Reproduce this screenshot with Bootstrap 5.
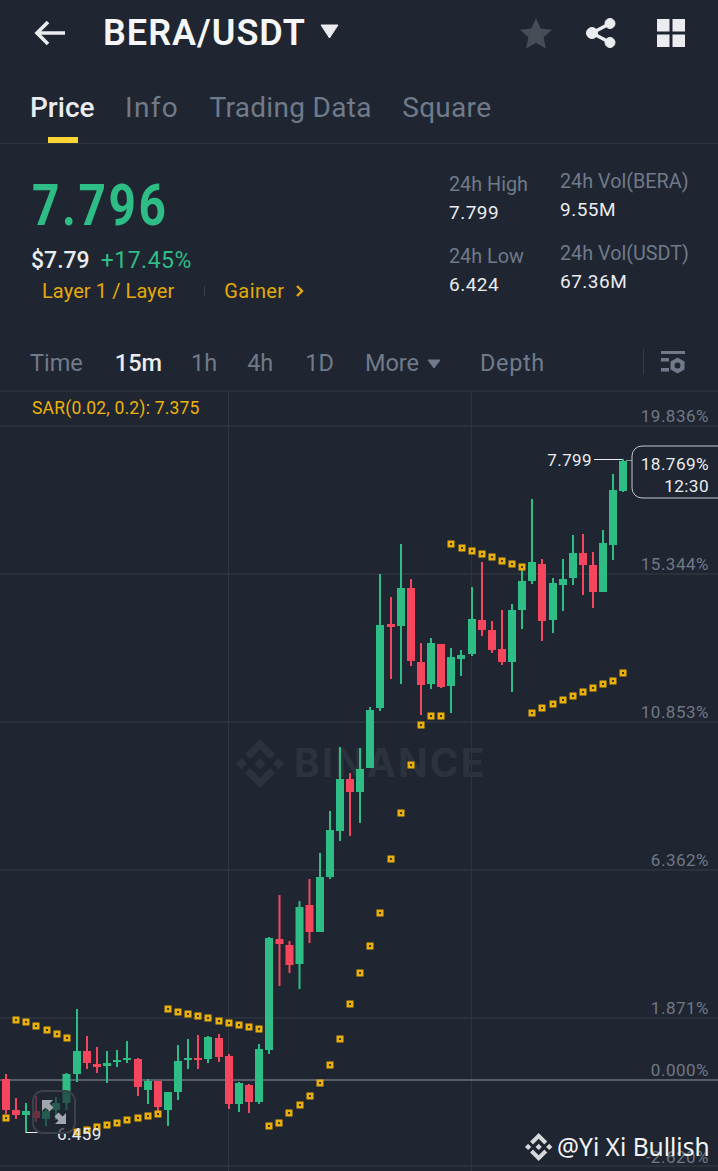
<!DOCTYPE html>
<html>
  <head>
    <title>BERA/USDT</title>
    <link href="https://cdn.jsdelivr.net/npm/bootstrap@5.3.3/dist/css/bootstrap.min.css" rel="stylesheet">
    <script src="https://cdn.jsdelivr.net/npm/bootstrap@5.3.3/dist/js/bootstrap.bundle.min.js"></script>
    <style>
      html, body { margin: 0; background: #1f2631; }
      body { width: 718px; height: 1171px; overflow: hidden; font-family: Roboto, "Liberation Sans", sans-serif; color: #eaecef; }
      .top-bar { height: 66px; padding: 0 33px 0 34px; }
      .pair-title { margin-left: 37px; font-size: 36px; font-weight: 600; letter-spacing: 1px; color: #f5f6f7; }
      .title-caret { margin: -4px 0 0 14px; }
      .star-btn { margin-right: 34px; }
      .grid-btn { margin-left: 41px; }
      .tab-bar { height: 78px; padding-left: 30px; gap: 30.500px; border-bottom: 1px solid #2d343e; }
      .tab-link { font-size: 28px; letter-spacing: .3px; color: #707a8a; height: 100%; padding-top: 21px; position: relative; }
      .tab-link.on { color: #eaecef; font-weight: 500; letter-spacing: 0; }
      .tab-link.on::after { content: ""; position: absolute; left: 18px; bottom: 0; width: 30px; height: 6px; background: #fcd535; }
      .tab-wide { letter-spacing: 1.300px; }
      .summary { height: 186px; padding-left: 32px; position: relative; }
      .last-price { font-size: 57px; font-weight: 700; line-height: 58px; color: #2ebd85; padding-top: 33px; letter-spacing: 3px; transform: scaleX(.84); transform-origin: left top; }
      .usd-line { margin-top: 12px; font-size: 23px; line-height: 28px; font-weight: 500; margin-left: -1px; }
      .usd-line .chg { margin-left: 11px; color: #2ebd85; font-weight: 400; letter-spacing: .5px; }
      .tag-line { margin-top: 2px; margin-left: 10px; font-size: 20px; line-height: 28px; color: #e5a90c; letter-spacing: .1px; }
      .tag-sep { width: 1px; height: 10px; background: #3a414b; margin: 0 19px 0 30px; }
      .gainer { letter-spacing: .4px; }
      .tag-chev { margin-left: 10px; }
      .stat-cols { position: absolute; left: 449px; top: 27px; gap: 32px; }
      .stat-name { font-size: 19.800px; line-height: 28px; color: #707a8a; }
      .stat-val { font-size: 19px; line-height: 28px; letter-spacing: .5px; color: #eaecef; margin-bottom: 16px; }
      .stat-shift { margin-top: -3px; }
      .int-bar { height: 62px; padding: 7px 0 0 30px; border-bottom: 2px solid #2a313b; font-size: 23.500px; color: #707a8a; position: relative; }
      .int-bar .on { color: #eaecef; font-weight: 500; }
      .int-item { margin-right: 32px; }
      .int-item.on { margin-right: 29px; }
      .int-item.tight { margin-right: 30px; }
      .int-item.last-int { margin-right: 31px; }
      .depth-item { margin-left: 39px; letter-spacing: .6px; }
      .int-tools { position: absolute; left: 643px; top: 19px; }
      .chart-wrap { display: block; }
      .chart-wrap text { font-family: Roboto, "Liberation Sans", sans-serif; }
      .ax { font-size: 17px; fill: #6f7886; text-anchor: end; letter-spacing: .5px; }
      .credit { font-family: "Noto Sans", sans-serif !important; font-size: 24.500px; fill: #f2f3f4; }
      .mark-word { font-family: Inter, sans-serif !important; font-size: 39px; font-weight: 700; fill: #2d333d; letter-spacing: 2.100px; }
    </style>
  </head>
  <body>
    <header class="top-bar d-flex align-items-center">
      <svg width="32" height="26" viewBox="0 0 32 26" fill="none" stroke="#eaecef" stroke-width="3.6"><path d="M31 13H4M14 2L3 13l11 11"/></svg>
      <span class="pair-title">BERA/USDT</span>
      <svg class="title-caret" width="19" height="14" viewBox="0 0 19 14"><path d="M1 1h17l-8.500 13z" fill="#eaecef" stroke="#eaecef" stroke-linejoin="round"/></svg>
      <div class="ms-auto d-flex align-items-center">
        <svg class="star-btn" width="32" height="31" viewBox="0 0 32 31"><path d="M16 0l4.700 10.400 11.300 1.300-8.400 7.600 2.300 11.200L16 24.800 6.100 30.500l2.300-11.200L0 11.700l11.300-1.300z" fill="#474d57"/></svg>
        <svg width="30" height="30" viewBox="0 0 30 30" fill="#eaecef" stroke="#eaecef"><circle cx="6" cy="15" r="5.500"/><circle cx="24" cy="5.500" r="5"/><circle cx="24" cy="24.500" r="5"/><path d="M6 15L24 5.500M6 15l18 9.500" stroke-width="3.400"/></svg>
        <svg class="grid-btn" width="28" height="28" viewBox="0 0 28 28" fill="#eaecef"><rect width="12.500" height="12.500"/><rect x="15.500" width="12.500" height="12.500"/><rect y="15.500" width="12.500" height="12.500"/><rect x="15.500" y="15.500" width="12.500" height="12.500"/></svg>
      </div>
    </header>

    <nav class="tab-bar d-flex">
      <div class="tab-link on">Price</div>
      <div class="tab-link tab-wide">Info</div>
      <div class="tab-link">Trading Data</div>
      <div class="tab-link">Square</div>
    </nav>

    <section class="summary">
      <div class="last-price">7.796</div>
      <div class="usd-line">$7.79<span class="chg">+17.45%</span></div>
      <div class="tag-line d-flex align-items-center">
        <span>Layer 1 / Layer</span><span class="tag-sep"></span><span class="gainer">Gainer</span>
        <svg class="tag-chev" width="10" height="14" viewBox="0 0 10 14" fill="none" stroke="#e5a90c" stroke-width="2.400"><path d="M2 2l5 5-5 5"/></svg>
      </div>
      <div class="stat-cols d-flex">
        <div>
          <div class="stat-name">24h High</div>
          <div class="stat-val">7.799</div>
          <div class="stat-name">24h Low</div>
          <div class="stat-val">6.424</div>
        </div>
        <div class="stat-shift">
          <div class="stat-name">24h Vol(BERA)</div>
          <div class="stat-val">9.55M</div>
          <div class="stat-name">24h Vol(USDT)</div>
          <div class="stat-val">67.36M</div>
        </div>
      </div>
    </section>

    <div class="int-bar d-flex align-items-center">
      <span class="int-item">Time</span>
      <span class="int-item on">15m</span>
      <span class="int-item tight">1h</span>
      <span class="int-item">4h</span>
      <span class="int-item last-int">1D</span>
      <span>More</span>
      <svg class="ms-2" width="14" height="10" viewBox="0 0 14 10"><path d="M1 1h12L7 9z" fill="#707a8a" stroke="#707a8a" stroke-linejoin="round"/></svg>
      <span class="depth-item">Depth</span>
      <div class="int-tools d-flex">
        <svg width="44" height="26" viewBox="0 0 44 26" fill="#707a8a"><rect y="0" width="1" height="25" fill="#363c45"/><rect x="18" y="2" width="24" height="3"/><rect x="18" y="9" width="8" height="3.500"/><rect x="18" y="19" width="8" height="3.500"/><path fill-rule="evenodd" d="M34.500 8.500l7 4v8l-7 4-7-4v-8zm0 5a3 3 0 100 6 3 3 0 000-6z"/></svg>
      </div>
    </div>

    <svg id="chart" class="chart-wrap" width="718" height="779" viewBox="0 392 718 779"></svg>

    <script>
      // x, high, low, bodyTop, bodyBottom, g/r
      const candles = [
        [6,1074,1114,1079,1110,'r'],[16,1098,1119,1110,1115,'r'],[26,1103,1133,1111,1115,'g'],
        [36,1096,1122,1111,1118,'r'],[46,1103,1126,1111,1119,'g'],[56,1097,1120,1103,1110,'g'],
        [66.500,1073,1110,1074,1103,'g'],[77,1009,1082,1051,1074,'g'],[87,1036,1069,1051,1063,'r'],
        [97,1047,1073,1064,1067,'r'],[107,1051,1083,1063,1066,'g'],[117,1050,1067,1060,1062,'g'],
        [127,1041,1063,1058,1060,'g'],[138,1058,1096,1059,1087,'r'],[148,1079,1104,1081,1090,'g'],
        [158,1081,1111,1081,1107,'r'],[168,1092,1126,1092,1110,'g'],[178,1045,1100,1061,1092,'g'],
        [188,1039,1069,1058,1060,'g'],[198,1035,1069,1058,1060,'r'],[208,1036,1063,1037,1059,'g'],
        [219,1034,1062,1038,1057,'r'],[229,1054,1109,1056,1104,'r'],[239,1082,1112,1083,1104,'g'],
        [249,1084,1113,1085,1102,'r'],[259,1044,1104,1049,1102,'g'],[269,937,1054,938,1050,'g'],
        [279.500,895,986,939,944,'r'],[289.500,941,973,945,965,'r'],[299.500,901,989,907,964,'g'],
        [309.500,879,943,905,932,'r'],[320,853,932,877,932,'g'],[330,811,879,830,877,'g'],
        [340,747,841,779,831,'g'],[350,773,836,779,792,'r'],[360,748,823,769,792,'g'],
        [370,707,768,710,768,'g'],[380,574,711,625,708,'g'],[391,597,679,624,627,'r'],
        [401,544,684,588,626,'g'],[411,579,666,588,661,'r'],[421,643,715,662,685,'r'],
        [431,638,689,643,684,'g'],[441,644,688,644,687,'r'],[451,648,713,657,686,'g'],
        [461,650,676,655,659,'g'],[472,587,656,619,654,'g'],[482,562,636,620,630,'r'],
        [492,621,653,630,650,'r'],[502,610,665,649,662,'r'],[512,604,692,610,662,'g'],
        [522,570,629,581,610,'g'],[532,499,584,562,581,'g'],[542,559,641,564,621,'r'],
        [553,578,633,583,620,'g'],[563,559,611,579,585,'g'],[573,535,585,553,578,'g'],
        [583,534,595,553,565,'r'],[593,552,608,565,592,'r'],[603,530,592,543,592,'g'],
        [613,474,560,490,545,'g'],[623,459,492,461,491,'g']
      ];
      const sar = [
        [6,1118],[16,1020],[26,1022],[36,1026],[47,1030],[57,1034],[67,1038],
        [77,1132],[87,1130],[97,1127],[107,1125],[117,1123],[127,1120],[138,1118],[148,1116],[158,1114],
        [168,1009],[178,1012],[188,1014],[198,1016],[208,1018],[219,1021],[229,1023],[239,1025],[249,1027],[259,1029],
        [269,1126],[279,1123],[289,1113],[300,1105],[310,1096],[320,1083],[330,1065],[340,1039],[350,1004],
        [360,973],[370,946],[380,913],[391,859],[401,813],[411,765],[421,725],[431,716],[441,716],
        [451,544],[462,548],[472,551],[482,554],[492,557],[502,561],[512,564],[522,567],
        [532,713],[542,708],[553,704],[563,700],[573,696],[583,692],[593,688],[603,684],[613,681],[623,673]
      ];
      const axis = [['19.836%',416],['15.344%',564],['10.853%',712],['6.362%',860],['1.871%',1008],['0.000%',1070],['-2.620%',1157]];
      const logo = 'M24 0l15 15-5 5-10-10-10 10-5-5zM24 49l15-15-5-5-10 10-10-10-5 5zM24 19l5.500 5.500-5.500 5.500-5.500-5.500zM5.500 19l5.500 5.500-5.500 5.500L0 24.500zM42.500 19l5.500 5.500-5.500 5.500-5.500-5.500z';

      let s = '';
      [426,574,722,870,1018,1166].forEach(y => { s += `<rect x="0" y="${y-1}" width="718" height="2" fill="#2a313b"/>`; });
      [228,471].forEach(x => { s += `<rect x="${x}" y="392" width="1" height="779" fill="#2e353f"/>`; });
      s += `<rect x="0" y="1079" width="718" height="2" fill="#585e68"/>`;
      s += `<path transform="translate(236 739)" d="${logo}" fill="#2d333d"/>`;
      s += `<text class="mark-word" x="294" y="777">BINANCE</text>`;
      axis.forEach(a => { s += `<text class="ax" x="709" y="${a[1]+6}">${a[0]}</text>`; });
      s += `<text x="32" y="414" font-size="17.500" letter-spacing=".2" fill="#eeb20b">SAR(0.02, 0.2): 7.375</text>`;

      candles.forEach(c => {
        const col = c[5] === 'g' ? '#2ebd85' : '#f6465d';
        s += `<rect x="${c[0]-1}" y="${c[1]}" width="2" height="${c[2]-c[1]}" fill="${col}"/>`;
        s += `<rect x="${c[0]-4}" y="${c[3]}" width="8" height="${c[4]-c[3]}" fill="${col}"/>`;
      });
      sar.forEach(d => {
        s += `<rect x="${d[0]-3.5}" y="${d[1]-3.5}" width="7" height="7" fill="#e9ae0a"/>`;
        s += `<rect x="${d[0]-1}" y="${d[1]-1}" width="2" height="2" fill="#3a3a2a"/>`;
      });

      // last high / low labels
      s += `<text x="592" y="466" text-anchor="end" font-size="17" fill="#eaecef" letter-spacing=".4">7.799</text>`;
      s += `<rect x="594" y="459" width="28" height="1" fill="#eaecef"/>`;
      s += `<rect x="626" y="460" width="8" height="1" fill="#8a9099"/>`;
      s += `<text x="57" y="1140" font-size="17" fill="#eaecef" letter-spacing=".4">6.459</text>`;
      s += `<rect x="26" y="1132" width="12" height="1" fill="#eaecef"/>`;
      // price tag
      s += `<rect x="632" y="446" width="100" height="52" rx="10" fill="#1f2631" stroke="#c4c7cc"/>`;
      s += `<text x="709" y="470" text-anchor="end" font-size="17.200" fill="#eaecef" letter-spacing=".4">18.769%</text>`;
      s += `<text x="709" y="492" text-anchor="end" font-size="17.200" fill="#eaecef" letter-spacing=".4">12:30</text>`;
      // expand button over the candles
      s += `<rect x="33" y="1091" width="42" height="42" rx="10" fill="#1f2631" fill-opacity=".65" stroke="#3b4049" stroke-width="2"/>`;
      s += `<path d="M42 1100h11l-3.500 3.500 4 4-4 4-4-4-3.500 3.500zM66 1124H55l3.500-3.500-4-4 4-4 4 4 3.500-3.500z" fill="#a3a6ac"/>`;
      // repost credit
      s += `<path transform="translate(525 1133) scale(.57)" d="${logo}" fill="#d6d8db"/>`;
      s += `<text class="credit" x="557" y="1156">@Yi Xi Bullish</text>`;
      document.getElementById('chart').innerHTML = s;
    </script>
  </body>
</html>
